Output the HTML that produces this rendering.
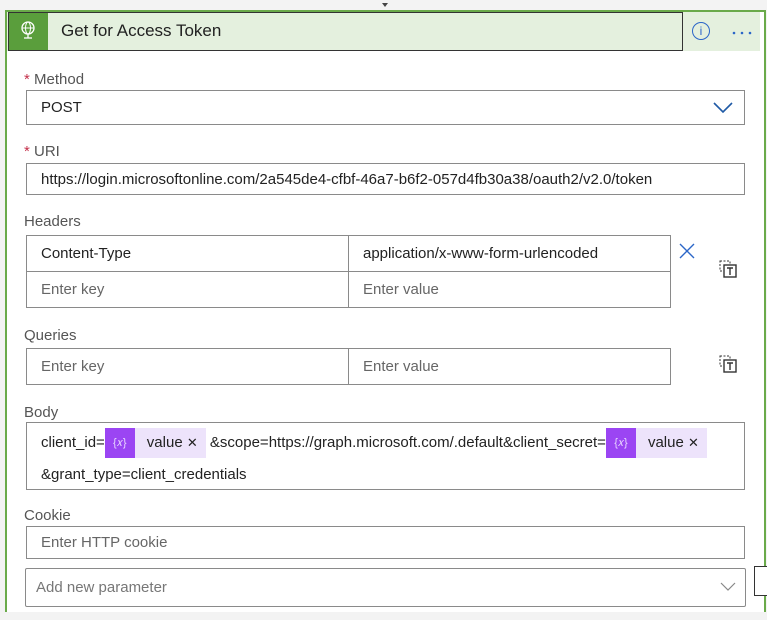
<!DOCTYPE html>
<html><head><style>
body{margin:0;width:767px;height:620px;background:#f3f3f3;font-family:"Liberation Sans",sans-serif;position:relative;overflow:hidden;color:#222}
.a{position:absolute}
.card{left:5px;top:10px;width:757px;height:602px;border:2px solid #6aaa4a;border-bottom:none;background:#fff}
.hdr{left:7px;top:12px;width:753px;height:39px;background:#e4f0de}
.hin{left:8px;top:12px;width:673px;height:37px;border:1px solid #333;background:#e4f0de}
.ico{left:9px;top:13px;width:39px;height:37px;background:#5a9e3c}
.lbl{font-size:15px;color:#555}
.box{border:1px solid #8a8a8a;background:#fff;box-sizing:border-box;font-size:15px;padding-left:14px;display:flex;align-items:center;white-space:nowrap}
.ph{color:#666}
.st{color:#c4314b}
.tok{display:inline-flex;align-items:center;height:30px;background:#ede3fb;vertical-align:middle}
.tok .p{width:30px;height:30px;background:#9b45f3;color:#e8d6ff;font-size:11px;display:flex;align-items:center;justify-content:center}
</style></head><body>
<div class="a" style="left:382px;top:3px;width:0;height:0;border-left:3px solid transparent;border-right:3px solid transparent;border-top:4px solid #444"></div>
<div class="a card"></div>
<div class="a hdr"></div>
<div class="a hin"></div>
<div class="a ico"><svg width="39" height="37"><circle cx="19" cy="15" r="6" fill="none" stroke="#fff" stroke-width="1.3"/><ellipse cx="19" cy="15" rx="2.5" ry="6" fill="none" stroke="#fff" stroke-width="1"/><line x1="13" y1="15" x2="25" y2="15" stroke="#fff"/><line x1="19" y1="21" x2="19" y2="25" stroke="#fff" stroke-width="1.3"/><line x1="15" y1="25" x2="23" y2="25" stroke="#fff" stroke-width="1.3"/></svg></div>
<div class="a" style="left:61px;top:21px;font-size:17px;color:#222">Get for Access Token</div>
<div class="a" style="left:692px;top:22px;width:16px;height:16px;border:1.3px solid #2b66c8;border-radius:50%;color:#2b66c8;font-size:12px;text-align:center;line-height:16px">i</div>
<svg class="a" style="left:731px;top:30px" width="22" height="6"><circle cx="3" cy="3" r="1.3" fill="#2b66c8"/><circle cx="11" cy="3" r="1.3" fill="#2b66c8"/><circle cx="19" cy="3" r="1.3" fill="#2b66c8"/></svg>

<div class="a lbl" style="left:24px;top:71px"><span class="st">*</span> Method</div>
<div class="a box" style="left:26px;top:90px;width:719px;height:35px">POST</div>
<svg class="a" style="left:713px;top:100px" width="20" height="14"><path d="M1 3 L10 12 L19 3" fill="none" stroke="#1f5aa6" stroke-width="1.6"/></svg>

<div class="a lbl" style="left:24px;top:143px"><span class="st">*</span> URI</div>
<div class="a box" style="left:26px;top:163px;width:719px;height:32px">https://login.microsoftonline.com/2a545de4-cfbf-46a7-b6f2-057d4fb30a38/oauth2/v2.0/token</div>

<div class="a lbl" style="left:24px;top:213px">Headers</div>
<div class="a box" style="left:26px;top:235px;width:323px;height:37px">Content-Type</div>
<div class="a box" style="left:348px;top:235px;width:323px;height:37px">application/x-www-form-urlencoded</div>
<div class="a box" style="left:26px;top:271px;width:323px;height:37px"><span class="ph">Enter key</span></div>
<div class="a box" style="left:348px;top:271px;width:323px;height:37px"><span class="ph">Enter value</span></div>
<svg class="a" style="left:678px;top:242px" width="18" height="18"><path d="M2 2L16 16M16 2L2 16" stroke="#2b66c8" stroke-width="1.4"/></svg>
<svg class="a" style="left:718px;top:259px" width="22" height="20"><rect x="2" y="2" width="10" height="10" fill="none" stroke="#333" stroke-dasharray="2 1.5"/><rect x="6" y="6" width="12" height="12" fill="#fff" stroke="#333" stroke-width="1.4"/><path d="M9 9h6M12 9v7" stroke="#333" stroke-width="1.4"/></svg>

<div class="a lbl" style="left:24px;top:327px">Queries</div>
<div class="a box" style="left:26px;top:348px;width:323px;height:37px"><span class="ph">Enter key</span></div>
<div class="a box" style="left:348px;top:348px;width:323px;height:37px"><span class="ph">Enter value</span></div>
<svg class="a" style="left:718px;top:354px" width="22" height="20"><rect x="2" y="2" width="10" height="10" fill="none" stroke="#333" stroke-dasharray="2 1.5"/><rect x="6" y="6" width="12" height="12" fill="#fff" stroke="#333" stroke-width="1.4"/><path d="M9 9h6M12 9v7" stroke="#333" stroke-width="1.4"/></svg>

<div class="a lbl" style="left:24px;top:404px">Body</div>
<div class="a box" style="left:26px;top:422px;width:719px;height:68px;display:block;padding-top:5px;line-height:30px">client_id=<span class="tok"><span class="p">{𝑥}</span><span style="padding:0 8px 0 12px">value <span style="font-size:13px">✕</span></span></span> &amp;scope=https://graph.microsoft.com/.default&amp;client_secret=<span class="tok"><span class="p">{𝑥}</span><span style="padding:0 8px 0 12px">value <span style="font-size:13px">✕</span></span></span><br><span style="position:relative;top:2px">&amp;grant_type=client_credentials</span></div>

<div class="a lbl" style="left:24px;top:507px">Cookie</div>
<div class="a box" style="left:26px;top:526px;width:719px;height:33px"><span class="ph">Enter HTTP cookie</span></div>
<div class="a box" style="left:25px;top:568px;width:721px;height:39px;padding-left:10px;border-radius:2px"><span class="ph" style="color:#777">Add new parameter</span></div>
<svg class="a" style="left:720px;top:582px" width="16" height="10"><path d="M1 1L8 8L15 1" fill="none" stroke="#888" stroke-width="1.2"/></svg>
<div class="a" style="left:754px;top:566px;width:20px;height:28px;border:1px solid #333;background:#fff"></div>
<div class="a" style="left:0;top:612px;width:767px;height:8px;background:#f3f3f3"></div>
</body></html>
